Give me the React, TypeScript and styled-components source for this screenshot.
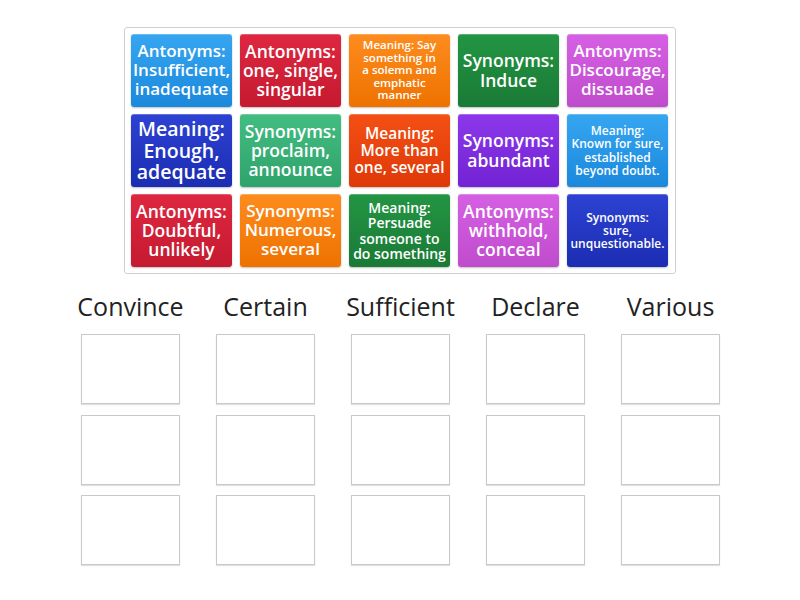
import styled, { createGlobalStyle } from 'styled-components';

type Swatch = 'sky' | 'red' | 'orange' | 'green' | 'orchid' | 'navy' | 'teal' | 'flame' | 'violet';

interface TileData {
  lines: string[];
  swatch: Swatch;
  size: number;
}

// top / bottom of each tile's vertical gradient
const SWATCHES: Record<Swatch, [string, string]> = {
  sky: ['#36a6f1', '#1b88dc'],
  red: ['#de2740', '#c41a2f'],
  orange: ['#fd8c1e', '#ee7200'],
  green: ['#239543', '#1a7a36'],
  orchid: ['#d660e3', '#bf4bcd'],
  navy: ['#2d42d3', '#1b2db2'],
  teal: ['#42bd82', '#2fa36b'],
  flame: ['#f44f14', '#de3907'],
  violet: ['#8c38ea', '#7223d4'],
};

const TILES: TileData[] = [
  { lines: ['Antonyms:', 'Insufficient,', 'inadequate'], swatch: 'sky', size: 17 },
  { lines: ['Antonyms:', 'one, single,', 'singular'], swatch: 'red', size: 17.5 },
  { lines: ['Meaning: Say', 'something in', 'a solemn and', 'emphatic', 'manner'], swatch: 'orange', size: 11.5 },
  { lines: ['Synonyms:', 'Induce'], swatch: 'green', size: 17.5 },
  { lines: ['Antonyms:', 'Discourage,', 'dissuade'], swatch: 'orchid', size: 17 },
  { lines: ['Meaning:', 'Enough,', 'adequate'], swatch: 'navy', size: 19.5 },
  { lines: ['Synonyms:', 'proclaim,', 'announce'], swatch: 'teal', size: 17.5 },
  { lines: ['Meaning:', 'More than', 'one, several'], swatch: 'flame', size: 15.5 },
  { lines: ['Synonyms:', 'abundant'], swatch: 'violet', size: 17.5 },
  { lines: ['Meaning:', 'Known for sure,', 'established', 'beyond doubt.'], swatch: 'sky', size: 12 },
  { lines: ['Antonyms:', 'Doubtful,', 'unlikely'], swatch: 'red', size: 17.5 },
  { lines: ['Synonyms:', 'Numerous,', 'several'], swatch: 'orange', size: 17 },
  { lines: ['Meaning:', 'Persuade', 'someone to', 'do something'], swatch: 'green', size: 14 },
  { lines: ['Antonyms:', 'withhold,', 'conceal'], swatch: 'orchid', size: 17.5 },
  { lines: ['Synonyms:', 'sure,', 'unquestionable.'], swatch: 'navy', size: 12 },
];

const TARGETS = ['Convince', 'Certain', 'Sufficient', 'Declare', 'Various'];
const SLOTS_PER_TARGET = 3;

const GlobalStyle = createGlobalStyle`
  html, body {
    margin: 0;
    padding: 0;
    background: #ffffff;
  }
  body {
    font-family: "Open Sans", "Liberation Sans", sans-serif;
  }
`;

const Page = styled.main`
  width: 800px;
  height: 600px;
  padding-top: 27px;
  box-sizing: border-box;
`;

const Tray = styled.section`
  width: 552px;
  margin-left: 124px;
  box-sizing: border-box;
  padding: 6px 7px 6px 6px;
  border: 1px solid #cfcfcf;
  border-radius: 3px;
  display: grid;
  grid-template-columns: repeat(5, 101px);
  grid-auto-rows: 73px;
  column-gap: 8px;
  row-gap: 7px;
`;

const Tile = styled.div<{ $swatch: Swatch; $size: number }>`
  display: flex;
  flex-direction: column;
  align-items: center;
  justify-content: center;
  border-radius: 3px;
  background: linear-gradient(
    180deg,
    ${({ $swatch }) => SWATCHES[$swatch][0]} 0%,
    ${({ $swatch }) => SWATCHES[$swatch][1]} 100%
  );
  box-shadow: inset 0 1px 0 rgba(255, 255, 255, 0.25), 0 1px 2px rgba(0, 0, 0, 0.25);
  color: #ffffff;
  font-weight: 600;
  font-size: ${({ $size }) => $size}px;
  line-height: 1.1;
  text-align: center;
  overflow: hidden;
`;

const TileLine = styled.span`
  white-space: nowrap;
`;

const Board = styled.section`
  width: 675px;
  margin: 16px 0 0 63px;
  display: grid;
  grid-template-columns: repeat(5, 135px);
`;

const Column = styled.div`
  display: flex;
  flex-direction: column;
  align-items: center;
`;

const Heading = styled.h2`
  margin: 0 0 11px;
  height: 33px;
  font-size: 25px;
  font-weight: 400;
  line-height: 33px;
  color: #222222;
  white-space: nowrap;
`;

const Slots = styled.div`
  display: flex;
  flex-direction: column;
  gap: 10.5px;
`;

const Slot = styled.div`
  width: 99px;
  height: 70px;
  box-sizing: border-box;
  border: 1px solid #c9c9c9;
  background: #ffffff;
  box-shadow: 0 1px 1px rgba(0, 0, 0, 0.12);
`;

export default function App() {
  return (
    <>
      <GlobalStyle />
      <Page>
        <Tray>
          {TILES.map((tile, i) => (
            <Tile key={i} $swatch={tile.swatch} $size={tile.size}>
              {tile.lines.map((line) => (
                <TileLine key={line}>{line}</TileLine>
              ))}
            </Tile>
          ))}
        </Tray>
        <Board>
          {TARGETS.map((name) => (
            <Column key={name}>
              <Heading>{name}</Heading>
              <Slots>
                {Array.from({ length: SLOTS_PER_TARGET }, (_, i) => (
                  <Slot key={i} />
                ))}
              </Slots>
            </Column>
          ))}
        </Board>
      </Page>
    </>
  );
}
